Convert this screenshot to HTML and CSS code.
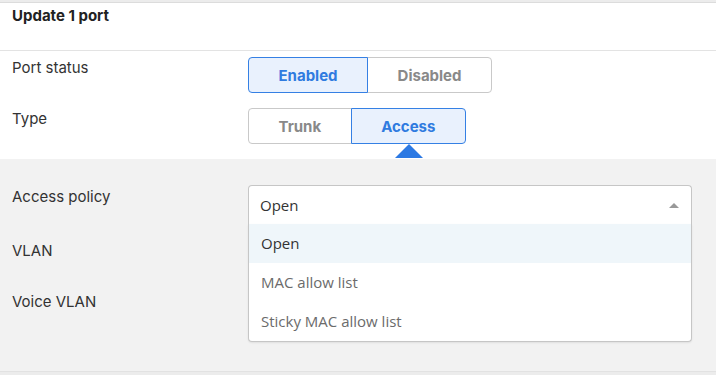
FILE: index.html
```html
<!DOCTYPE html>
<html lang="en">
<head>
    <meta charset="UTF-8">
    <meta name="viewport" content="width=device-width, initial-scale=1.0">
    <title>Update 1 port</title>
    <link rel="stylesheet" href="styles.css">
</head>
<body>
    <div class="panel">
        <div class="panel-header">
            <h1>Update 1 port</h1>
        </div>

        <div class="section">
            <div class="row">
                <div class="label">Port status</div>
                <div class="toggle">
                    <button class="toggle-btn active">Enabled</button>
                    <button class="toggle-btn">Disabled</button>
                </div>
            </div>
            <div class="row">
                <div class="label">Type</div>
                <div class="toggle">
                    <button class="toggle-btn">Trunk</button>
                    <button class="toggle-btn active pointer">Access</button>
                </div>
            </div>
        </div>

        <div class="section sub">
            <div class="row policy-row">
                <div class="label">Access policy</div>
                <div class="select open">
                    <span class="select-value">Open</span>
                    <span class="caret"></span>
                    <ul class="menu">
                        <li class="menu-item selected">Open</li>
                        <li class="menu-item">MAC allow list</li>
                        <li class="menu-item">Sticky MAC allow list</li>
                    </ul>
                </div>
            </div>
            <div class="row vlan-row">
                <div class="label">VLAN</div>
                <div class="input"></div>
            </div>
            <div class="row">
                <div class="label">Voice VLAN</div>
                <div class="input"></div>
            </div>
        </div>
    </div>
</body>
</html>
```

FILE: styles.css
```css
body {
    margin: 0;
    padding-top: 2px;
    background-color: #ececec;
    font-family: Inter, "Noto Sans", sans-serif;
    color: #333;
}

.panel {
    border-top: 1px solid #dcdcdc;
    background-color: #fff;
}

.panel-header {
    height: 48px;
    box-sizing: border-box;
    padding: 4px 12px 0;
    border-bottom: 1px solid #e3e3e3;
}

.panel-header h1 {
    margin: 0;
    font-size: 15px;
    line-height: 18px;
    font-weight: 700;
    color: #222;
}

.section {
    padding: 6px 0 15px 12px;
}

.section .row + .row {
    margin-top: 15px;
}

.row {
    display: grid;
    grid-template-columns: 236px 1fr;
    align-items: start;
}

.label {
    padding-top: 2px;
    font-size: 15px;
    line-height: 18px;
}

.toggle {
    display: flex;
}

.toggle-btn {
    position: relative;
    height: 36px;
    padding: 0 29.5px;
    margin: 0;
    border: 1px solid #c9c9c9;
    background-color: #fff;
    font-family: Inter, "Noto Sans", sans-serif;
    font-size: 15px;
    font-weight: 700;
    color: #898989;
}

.toggle-btn:first-child {
    border-radius: 4px 0 0 4px;
}

.toggle-btn:last-child {
    border-radius: 0 4px 4px 0;
    margin-left: -1px;
}

.toggle-btn.active {
    z-index: 1;
    border-color: #3580e4;
    background-color: #e9f1fd;
    color: #2f7be0;
}

/* little arrow under the chosen type */
.toggle-btn.pointer::after {
    content: "";
    position: absolute;
    left: 50%;
    top: 100%;
    margin-left: -13px;
    margin-top: 1px;
    border-left: 14px solid transparent;
    border-right: 14px solid transparent;
    border-bottom: 14px solid #2c79e3;
}

.section.sub {
    padding: 26px 24px 44px 12px;
    background-color: #f2f2f2;
    border-bottom: 1px solid #e2e2e2;
}

.section.sub .policy-row .label {
    padding-top: 3px;
}

.section.sub .row + .row {
    margin-top: 15px;
}

.section.sub .vlan-row {
    margin-top: 17px;
}

.input {
    height: 36px;
}

.select {
    position: relative;
    height: 40px;
    box-sizing: border-box;
    padding: 0 11px;
    display: flex;
    align-items: center;
    border: 1px solid #c6c6c6;
    border-radius: 4px;
    background-color: #fff;
    font-family: "Open Sans", "Noto Sans", sans-serif;
    font-size: 15px;
    color: #333;
}

.select.open {
    border-radius: 4px 4px 0 0;
    border-bottom-color: #e0e0e0;
}

.select-value {
    flex: 1;
}

.caret {
    width: 0;
    height: 0;
    margin-right: 1px;
    border-left: 5px solid transparent;
    border-right: 5px solid transparent;
    border-bottom: 5px solid #999;
}

.menu {
    position: absolute;
    top: 100%;
    left: -1px;
    right: -1px;
    z-index: 5;
    margin: 0;
    padding: 0;
    list-style: none;
    background-color: #fff;
    border: 1px solid #c6c6c6;
    border-top: none;
    border-radius: 0 0 4px 4px;
    box-shadow: 0 1px 2px rgba(0, 0, 0, 0.08);
}

.menu-item {
    height: 39px;
    line-height: 39px;
    padding: 0 12px;
    color: #6b6b6b;
}

.menu-item.selected {
    background-color: #eff6fa;
    color: #333;
}
```
